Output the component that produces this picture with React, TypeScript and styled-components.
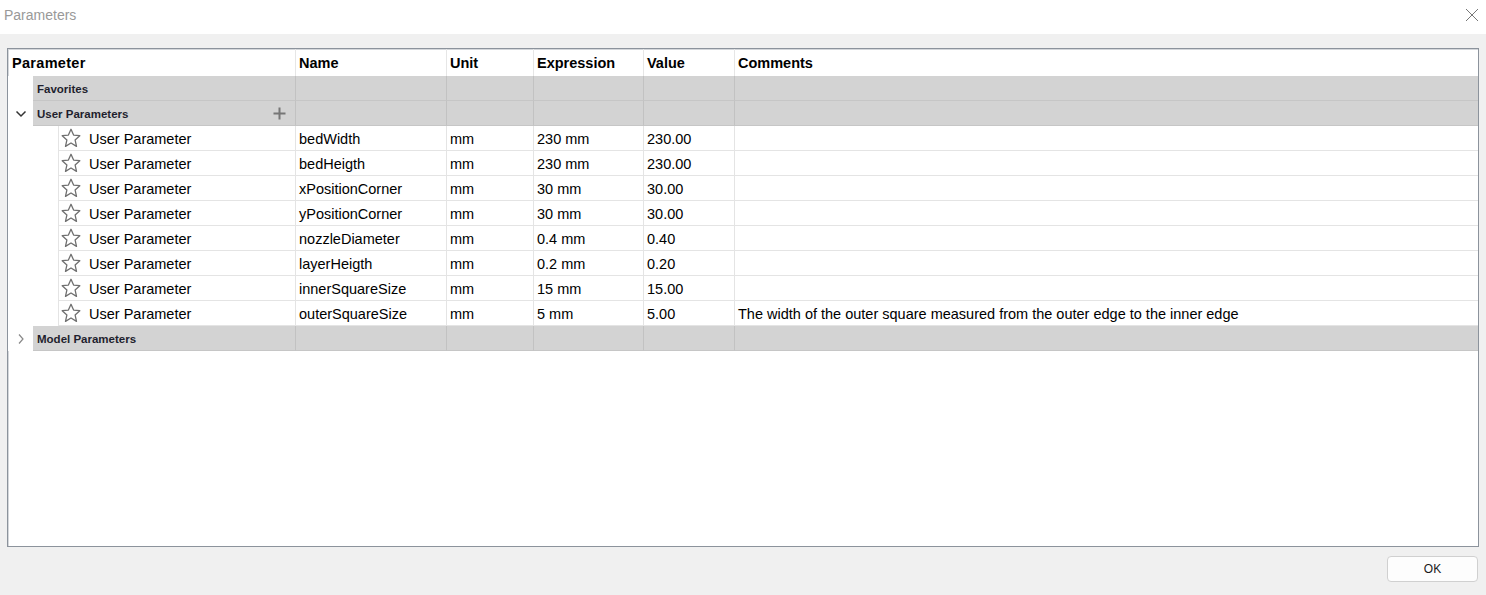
import styled, { createGlobalStyle } from 'styled-components';

type Param = {
  name: string;
  expression: string;
  value: string;
  comment?: string;
};

const userParams: Param[] = [
  { name: 'bedWidth', expression: '230 mm', value: '230.00' },
  { name: 'bedHeigth', expression: '230 mm', value: '230.00' },
  { name: 'xPositionCorner', expression: '30 mm', value: '30.00' },
  { name: 'yPositionCorner', expression: '30 mm', value: '30.00' },
  { name: 'nozzleDiameter', expression: '0.4 mm', value: '0.40' },
  { name: 'layerHeigth', expression: '0.2 mm', value: '0.20' },
  { name: 'innerSquareSize', expression: '15 mm', value: '15.00' },
  {
    name: 'outerSquareSize',
    expression: '5 mm',
    value: '5.00',
    comment: 'The width of the outer square measured from the outer edge to the inner edge',
  },
];

const columns = ['Parameter', 'Name', 'Unit', 'Expression', 'Value', 'Comments'];

const GlobalStyle = createGlobalStyle`
  html, body {
    margin: 0;
    padding: 0;
    background: #f0f0f0;
    font-family: "Liberation Sans", Arial, sans-serif;
  }
`;

const Dialog = styled.div`
  width: 1486px;
  height: 595px;
  display: flex;
  flex-direction: column;
  background: #f0f0f0;
  overflow: hidden;
`;

const TitleBar = styled.div`
  height: 34px;
  background: #fff;
  display: flex;
  align-items: center;
  justify-content: space-between;
  padding: 0 7px 4px 4px;
  box-sizing: border-box;
`;

const Title = styled.span`
  font-size: 14px;
  color: #999;
`;

const Body = styled.div`
  padding: 14px 7px 0 7px;
`;

const Panel = styled.div`
  height: 499px;
  box-sizing: border-box;
  background: #fff;
  border: 1px solid #8c939c;
  box-shadow: inset 1px 1px 0 #d4d7db;
  display: flex;
  flex-direction: column;
`;

const Row = styled.div`
  display: grid;
  grid-template-columns: 288px 151px 87px 110px 91px 1fr;
  height: 25px;
`;

const HeaderRow = styled(Row)`
  height: 27px;
`;

const HeaderCell = styled.div`
  display: flex;
  align-items: center;
  padding-left: 3px;
  border-right: 1px solid #e6e6e6;
  font-size: 14.5px;
  font-weight: bold;
  color: #000;

  &:first-child {
    padding-left: 4px;
    letter-spacing: 0.3px;
  }
  &:last-child {
    border-right: none;
  }
`;

const GroupFirst = styled.div`
  display: flex;
`;

const Toggle = styled.div`
  width: 25px;
  display: flex;
  align-items: center;
  justify-content: center;
  background: #fff;
`;

const GroupLabel = styled.div`
  flex: 1;
  display: flex;
  align-items: center;
  justify-content: space-between;
  padding: 1px 9px 0 4px;
  background: #d3d3d3;
  border-right: 1px solid #c2c2c2;
  border-bottom: 1px solid #c6c6c6;
  font-size: 11.5px;
  font-weight: bold;
  color: #1f1f2e;
`;

const GroupCell = styled.div`
  background: #d3d3d3;
  border-right: 1px solid #c2c2c2;
  border-bottom: 1px solid #c6c6c6;

  &:last-child {
    border-right: none;
  }
`;

const DataFirst = styled.div`
  display: flex;
`;

const Indent = styled.div`
  width: 50px;
  background: #fff;
`;

const ParamLabel = styled.div`
  flex: 1;
  display: flex;
  align-items: center;
  gap: 8px;
  padding: 1px 0 0 2px;
  border-left: 1px solid #e4e4e4;
  border-right: 1px solid #e4e4e4;
  border-bottom: 1px solid #e4e4e4;
  font-size: 14.5px;
  color: #000;

  svg {
    margin-top: -1px;
  }
`;

const DataCell = styled.div`
  display: flex;
  align-items: center;
  padding: 1px 0 0 3px;
  border-right: 1px solid #e4e4e4;
  border-bottom: 1px solid #e4e4e4;
  font-size: 14.5px;
  color: #000;
  white-space: nowrap;

  &:last-child {
    border-right: none;
  }
`;

const Footer = styled.div`
  display: flex;
  justify-content: flex-end;
  padding: 9px 8px 0 0;
`;

const OkButton = styled.button`
  width: 91px;
  height: 26px;
  background: #fdfdfd;
  border: 1px solid #d0d0d0;
  border-radius: 4px;
  font-family: "Liberation Sans", Arial, sans-serif;
  font-size: 12px;
  color: #1a1a1a;
  padding: 0;
`;

const StarIcon = () => (
  <svg width="20" height="20" viewBox="0 0 20 20">
    <polygon
      points="10,1.3 12.6,7.1 18.8,7.7 14.1,11.9 15.5,18.4 10,15 4.5,18.4 5.9,11.9 1.2,7.7 7.4,7.1"
      fill="none"
      stroke="#6f6f6f"
      strokeWidth="1.3"
      strokeLinejoin="round"
    />
  </svg>
);

const ChevronDown = () => (
  <svg width="12" height="8" viewBox="0 0 12 8">
    <path d="M1.5 1.5 L6 6 L10.5 1.5" fill="none" stroke="#333" strokeWidth="1.5" />
  </svg>
);

const ChevronRight = () => (
  <svg width="8" height="12" viewBox="0 0 8 12">
    <path d="M2 1.5 L6 6 L2 10.5" fill="none" stroke="#888" strokeWidth="1.2" />
  </svg>
);

const PlusIcon = () => (
  <svg width="13" height="13" viewBox="0 0 13 13">
    <path d="M6.5 0.5 V12.5 M0.5 6.5 H12.5" stroke="#767676" strokeWidth="2" />
  </svg>
);

const CloseIcon = () => (
  <svg width="14" height="14" viewBox="0 0 14 14">
    <path d="M1 1 L13 13 M13 1 L1 13" stroke="#777" strokeWidth="1" />
  </svg>
);

const GroupRow = ({ label, toggle, add }: { label: string; toggle?: 'open' | 'closed'; add?: boolean }) => (
  <Row>
    <GroupFirst>
      <Toggle>
        {toggle === 'open' && <ChevronDown />}
        {toggle === 'closed' && <ChevronRight />}
      </Toggle>
      <GroupLabel>
        <span>{label}</span>
        {add && <PlusIcon />}
      </GroupLabel>
    </GroupFirst>
    <GroupCell />
    <GroupCell />
    <GroupCell />
    <GroupCell />
    <GroupCell />
  </Row>
);

export default function App() {
  return (
    <>
      <GlobalStyle />
      <Dialog>
        <TitleBar>
          <Title>Parameters</Title>
          <CloseIcon />
        </TitleBar>
        <Body>
          <Panel>
            <HeaderRow>
              {columns.map((c) => (
                <HeaderCell key={c}>{c}</HeaderCell>
              ))}
            </HeaderRow>
            <GroupRow label="Favorites" />
            <GroupRow label="User Parameters" toggle="open" add />
            {userParams.map((p) => (
              <Row key={p.name}>
                <DataFirst>
                  <Indent />
                  <ParamLabel>
                    <StarIcon />
                    <span>User Parameter</span>
                  </ParamLabel>
                </DataFirst>
                <DataCell>{p.name}</DataCell>
                <DataCell>mm</DataCell>
                <DataCell>{p.expression}</DataCell>
                <DataCell>{p.value}</DataCell>
                <DataCell>{p.comment}</DataCell>
              </Row>
            ))}
            <GroupRow label="Model Parameters" toggle="closed" />
          </Panel>
        </Body>
        <Footer>
          <OkButton>OK</OkButton>
        </Footer>
      </Dialog>
    </>
  );
}
